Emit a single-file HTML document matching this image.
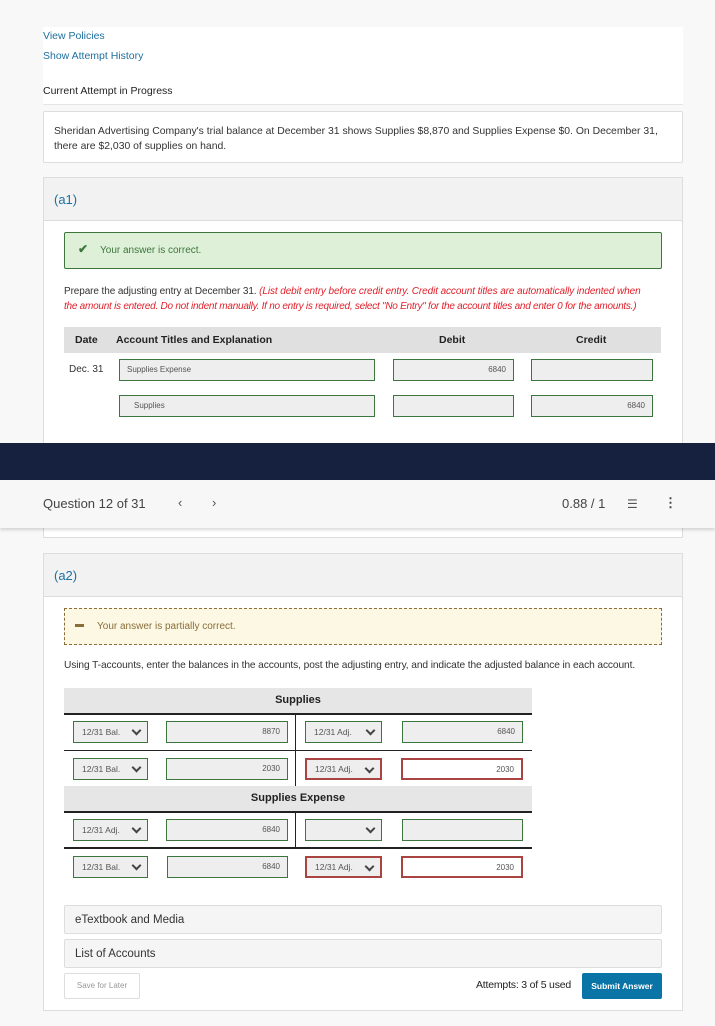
<!DOCTYPE html>
<html><head><style>
*{box-sizing:border-box;margin:0;padding:0}
body{width:715px;height:1026px;background:#f8f8f8;font-family:"Liberation Sans",sans-serif;position:relative;overflow:hidden;color:#333}
.a{position:absolute}
.t{font-size:10px;white-space:nowrap}
.in{position:absolute;background:#eee;border:1px solid #3c763d;height:22px;font-size:8px;color:#555;line-height:20px;padding:0 7px}
.r{text-align:right}
.bad{background:#fff;border:2px solid #a94442}
.sel{position:absolute;background:#eee;border:1px solid #3c763d;height:22px;font-size:8.5px;color:#555;line-height:20px;padding-left:8px}
.sel:after{content:"";position:absolute;right:7px;top:5px;width:5px;height:5px;border-right:2px solid #444;border-bottom:2px solid #444;transform:rotate(45deg)}
.sel.bad{border:2px solid #a94442;line-height:18px}
.hl{position:absolute;left:64px;width:468px;height:2px;background:#222}
</style></head><body>
<div class="a" style="left:43px;top:27px;width:640px;height:78px;background:#fff;border-bottom:1px solid #e5e5e5"></div>
<div class="a t" style="left:43px;top:30px;color:#1f6f9f;font-size:10.5px">View Policies</div>
<div class="a t" style="left:43px;top:50px;color:#1f6f9f;font-size:10.5px">Show Attempt History</div>
<div class="a t" style="left:43px;top:85px;color:#222;font-size:10.5px">Current Attempt in Progress</div>

<div class="a" style="left:43px;top:111px;width:640px;height:52px;background:#fff;border:1px solid #ddd;border-radius:2px"></div>
<div class="a t" style="left:54px;top:124px;font-size:10.4px;line-height:15px">Sheridan Advertising Company's trial balance at December 31 shows Supplies $8,870 and Supplies Expense $0. On December 31,<br>there are $2,030 of supplies on hand.</div>

<div class="a" style="left:43px;top:177px;width:640px;height:361px;background:#fff;border:1px solid #ddd"></div>
<div class="a" style="left:44px;top:178px;width:638px;height:43px;background:#f2f2f2;border-bottom:1px solid #ddd"></div>
<div class="a" style="left:54px;top:192px;color:#1f6f9f;font-size:13px">(a1)</div>
<div class="a" style="left:64px;top:232px;width:598px;height:37px;background:#dff0d8;border:1px solid #3c763d;border-radius:2px"></div>
<div class="a" style="left:78px;top:242px;font-size:12px;color:#3c763d;font-weight:bold">✔</div>
<div class="a t" style="left:100px;top:245px;color:#3c763d">Your answer is correct.</div>
<div class="a t" style="left:64px;top:284px;line-height:15px;font-size:10px;letter-spacing:-0.1px">Prepare the adjusting entry at December 31. <i style="color:#e0202a">(List debit entry before credit entry. Credit account titles are automatically indented when</i><br><i style="color:#e0202a;letter-spacing:-0.25px">the amount is entered. Do not indent manually. If no entry is required, select "No Entry" for the account titles and enter 0 for the amounts.)</i></div>
<div class="a" style="left:64px;top:327px;width:597px;height:26px;background:#e0e0e0"></div>
<div class="a t" style="left:75px;top:334px;font-weight:bold;color:#222;font-size:10.5px">Date</div>
<div class="a t" style="left:116px;top:334px;font-weight:bold;color:#222;font-size:10.5px">Account Titles and Explanation</div>
<div class="a t" style="left:439px;top:334px;font-weight:bold;color:#222;font-size:10.5px">Debit</div>
<div class="a t" style="left:576px;top:334px;font-weight:bold;color:#222;font-size:10.5px">Credit</div>
<div class="a t" style="left:69px;top:364px">Dec. 31</div>
<div class="in" style="left:119px;top:359px;width:256px">Supplies Expense</div>
<div class="in r" style="left:393px;top:359px;width:121px">6840</div>
<div class="in" style="left:531px;top:359px;width:122px"></div>
<div class="in" style="left:119px;top:395px;width:256px;padding-left:14px">Supplies</div>
<div class="in" style="left:393px;top:395px;width:121px"></div>
<div class="in r" style="left:531px;top:395px;width:122px">6840</div>

<div class="a" style="left:0;top:443px;width:715px;height:37px;background:#16213f"></div>
<div class="a" style="left:0;top:480px;width:715px;height:48px;background:#f7f7f7;box-shadow:0 2px 3px rgba(0,0,0,.15)"></div>
<div class="a" style="left:43px;top:496px;font-size:13px;color:#444">Question 12 of 31</div>
<div class="a" style="left:178px;top:495px;font-size:13px;color:#555">‹</div>
<div class="a" style="left:212px;top:495px;font-size:13px;color:#555">›</div>
<div class="a" style="left:562px;top:496px;font-size:13px;color:#444">0.88 / 1</div>
<div class="a" style="left:627px;top:498px;font-size:12px;color:#555;line-height:12px">☰</div>
<div class="a" style="left:664px;top:495px;font-size:13px;color:#444;font-weight:bold">⋮</div>

<div class="a" style="left:43px;top:553px;width:640px;height:458px;background:#fff;border:1px solid #ddd"></div>
<div class="a" style="left:44px;top:554px;width:638px;height:43px;background:#f2f2f2;border-bottom:1px solid #ddd"></div>
<div class="a" style="left:54px;top:568px;color:#1f6f9f;font-size:13px">(a2)</div>
<div class="a" style="left:64px;top:608px;width:598px;height:37px;background:#fcf8e3;border:1px dashed #8a6d3b"></div>
<div class="a" style="left:75px;top:624px;width:9px;height:3px;background:#8a6d3b"></div>
<div class="a t" style="left:97px;top:621px;color:#8a6d3b">Your answer is partially correct.</div>
<div class="a t" style="left:64px;top:660px;font-size:10.2px;letter-spacing:-0.1px">Using T-accounts, enter the balances in the accounts, post the adjusting entry, and indicate the adjusted balance in each account.</div>

<div class="a" style="left:64px;top:688px;width:468px;height:26px;background:#e6e6e6"></div>
<div class="a t" style="left:64px;top:694px;width:468px;text-align:center;font-weight:bold;color:#222;font-size:11px">Supplies</div>
<div class="hl" style="top:713px"></div>
<div class="a" style="left:295px;top:714px;width:1px;height:72px;background:#222"></div>
<div class="sel" style="left:73px;top:721px;width:75px">12/31 Bal.</div>
<div class="in r" style="left:166px;top:721px;width:122px">8870</div>
<div class="sel" style="left:305px;top:721px;width:77px">12/31 Adj.</div>
<div class="in r" style="left:402px;top:721px;width:121px">6840</div>
<div class="a" style="left:64px;top:750px;width:468px;height:1px;background:#222"></div>
<div class="sel" style="left:73px;top:758px;width:75px">12/31 Bal.</div>
<div class="in r" style="left:166px;top:758px;width:122px">2030</div>
<div class="sel bad" style="left:305px;top:758px;width:77px">12/31 Adj.</div>
<div class="in r bad" style="left:401px;top:758px;width:122px">2030</div>
<div class="a" style="left:64px;top:786px;width:468px;height:26px;background:#e6e6e6"></div>
<div class="a t" style="left:64px;top:792px;width:468px;text-align:center;font-weight:bold;color:#222;font-size:11px">Supplies Expense</div>
<div class="hl" style="top:811px"></div>
<div class="a" style="left:295px;top:812px;width:1px;height:36px;background:#222"></div>
<div class="sel" style="left:73px;top:819px;width:75px">12/31 Adj.</div>
<div class="in r" style="left:166px;top:819px;width:122px">6840</div>
<div class="sel" style="left:305px;top:819px;width:77px"></div>
<div class="in" style="left:402px;top:819px;width:121px"></div>
<div class="hl" style="top:847px"></div>
<div class="sel" style="left:73px;top:856px;width:75px">12/31 Bal.</div>
<div class="in r" style="left:167px;top:856px;width:121px">6840</div>
<div class="sel bad" style="left:305px;top:856px;width:77px">12/31 Adj.</div>
<div class="in r bad" style="left:401px;top:856px;width:122px">2030</div>

<div class="a" style="left:64px;top:905px;width:598px;height:29px;background:#f5f5f5;border:1px solid #ddd;border-radius:2px;font-size:11.5px;line-height:28px;padding-left:10px;color:#333">eTextbook and Media</div>
<div class="a" style="left:64px;top:939px;width:598px;height:29px;background:#f5f5f5;border:1px solid #ddd;border-radius:2px;font-size:11.5px;line-height:28px;padding-left:10px;color:#333">List of Accounts</div>
<div class="a" style="left:64px;top:973px;width:76px;height:26px;background:#fff;border:1px solid #ddd;border-radius:2px;font-size:8px;line-height:24px;text-align:center;color:#999">Save for Later</div>
<div class="a t" style="left:476px;top:979px;font-size:10.5px;color:#222;letter-spacing:-0.2px">Attempts: 3 of 5 used</div>
<div class="a" style="left:582px;top:973px;width:80px;height:26px;background:#0a74a6;border-radius:2px;font-size:8.5px;line-height:26px;text-align:center;color:#fff;font-weight:bold">Submit Answer</div>
</body></html>
